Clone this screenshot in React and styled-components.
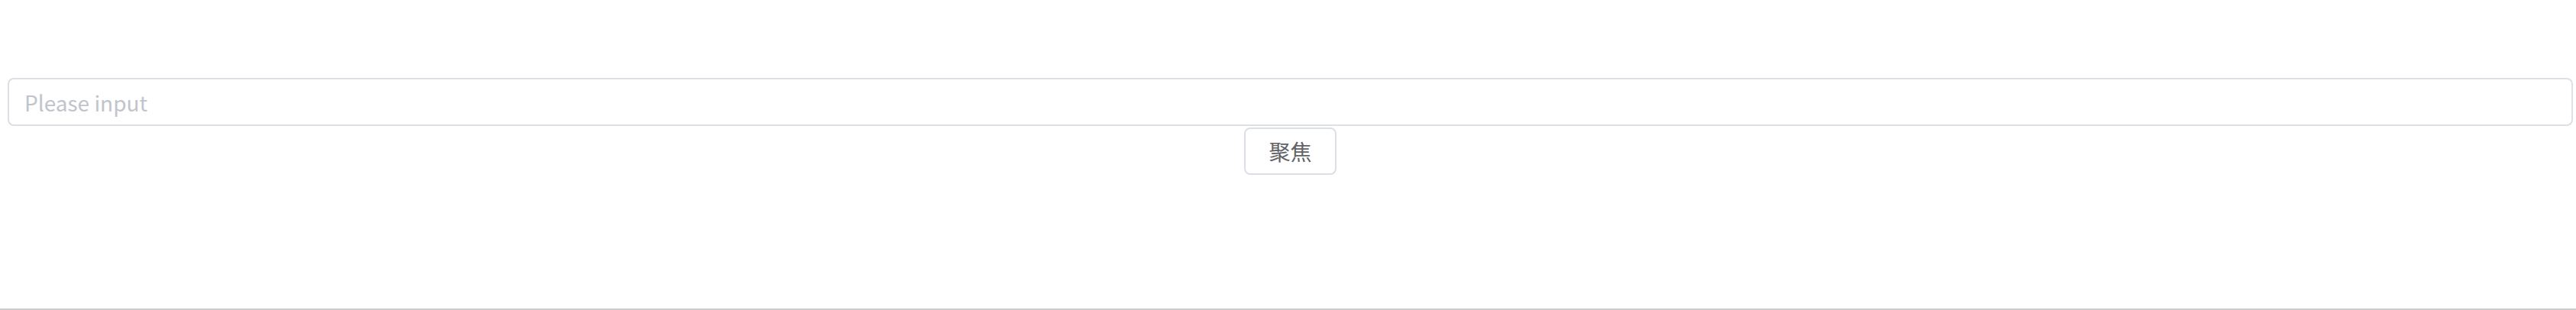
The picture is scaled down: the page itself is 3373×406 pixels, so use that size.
import React from 'react';
import styled, { createGlobalStyle } from 'styled-components';

const GlobalStyle = createGlobalStyle`
  html, body {
    margin: 0;
    padding: 0;
    background: #ffffff;
  }
  body {
    font-family: "Noto Sans CJK SC", "Noto Sans", sans-serif;
  }
`;

const Page = styled.div`
  box-sizing: border-box;
  height: 406px;
  padding: 102px 4px 0 10px;
  border-bottom: 2px solid #cccccc;
  display: flex;
  flex-direction: column;
  align-items: center;
`;

const InputWrapper = styled.div`
  box-sizing: border-box;
  width: 100%;
  height: 63px;
  display: flex;
  align-items: center;
  padding: 0 22px;
  border-radius: 8px;
  box-shadow: 0 0 0 2px #dcdfe6 inset;
  background: #ffffff;
`;

const TextInput = styled.input`
  flex: 1;
  height: 100%;
  border: none;
  outline: none;
  padding: 0;
  background: transparent;
  font-family: "Noto Sans CJK SC", "Noto Sans", sans-serif;
  font-size: 28px;
  color: #606266;

  &::placeholder {
    color: #c0c4cc;
  }
`;

const Button = styled.button`
  box-sizing: border-box;
  margin-top: 2px;
  height: 62px;
  padding: 0 30px;
  border: 2px solid #dcdfe6;
  border-radius: 8px;
  background: #ffffff;
  color: #606266;
  font-family: "Noto Sans CJK SC", "Noto Sans", sans-serif;
  font-size: 28px;
  line-height: 1;
  cursor: pointer;
`;

export default function App() {
  return (
    <>
      <GlobalStyle />
      <Page>
        <InputWrapper>
          <TextInput placeholder="Please input" />
        </InputWrapper>
        <Button>聚焦</Button>
      </Page>
    </>
  );
}
